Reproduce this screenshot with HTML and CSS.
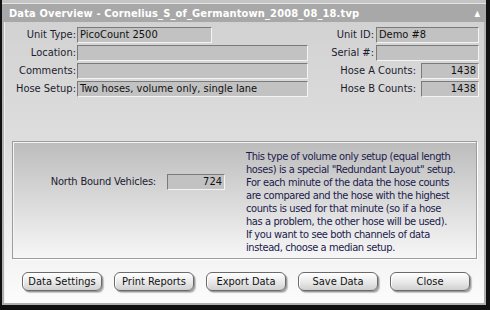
FILE: index.html
```html
<!DOCTYPE html>
<html lang="en">
<head>
    <meta charset="UTF-8">
    <meta name="viewport" content="width=device-width, initial-scale=1.0">
    <title>Data Overview</title>
    <link rel="stylesheet" href="styles.css">
</head>
<body>
    <div class="window">
        <div class="titlebar">
            <span class="title">Data Overview - Cornelius_S_of_Germantown_2008_08_18.tvp</span>
            <span class="arrow">&#9650;</span>
        </div>
        <div class="content">
            <div class="row">
                <span class="label lbl_left">Unit Type:</span>
                <span class="field f_short">PicoCount 2500</span>
                <span class="label lbl_right">Unit ID:</span>
                <span class="field f_id">Demo #8</span>
            </div>
            <div class="row">
                <span class="label lbl_left">Location:</span>
                <span class="field f_long"></span>
                <span class="label lbl_right">Serial #:</span>
                <span class="field f_id"></span>
            </div>
            <div class="row">
                <span class="label lbl_left">Comments:</span>
                <span class="field f_long"></span>
                <span class="label lbl_right">Hose A Counts:</span>
                <span class="field f_num">1438</span>
            </div>
            <div class="row">
                <span class="label lbl_left">Hose Setup:</span>
                <span class="field f_long">Two hoses, volume only, single lane</span>
                <span class="label lbl_right">Hose B Counts:</span>
                <span class="field f_num">1438</span>
            </div>

            <div class="group">
                <div class="group_left">
                    <span class="label nb_label">North Bound Vehicles:</span>
                    <span class="field f_num">724</span>
                </div>
                <p class="note">This type of volume only setup (equal length<br>
                    hoses) is a special "Redundant Layout" setup.<br>
                    For each minute of the data the hose counts<br>
                    are compared and the hose with the highest<br>
                    counts is used for that minute (so if a hose<br>
                    has a problem, the other hose will be used).<br>
                    If you want to see both channels of data<br>
                    instead, choose a median setup.</p>
            </div>

            <div class="buttons">
                <button type="button" class="btn">Data Settings</button>
                <button type="button" class="btn">Print Reports</button>
                <button type="button" class="btn">Export Data</button>
                <button type="button" class="btn">Save Data</button>
                <button type="button" class="btn">Close</button>
            </div>
        </div>
    </div>
</body>
</html>
```

FILE: styles.css
```css
body {
    margin: 0;
    background-color: #111;
    font-family: "DejaVu Sans Condensed", "Liberation Sans", sans-serif;
    font-size: 11px;
    width: 490px;
    height: 310px;
    overflow: hidden;
}
.window {
    margin-left: 2px;
    width: 484px;
    height: 302px;
    border-top: 3px solid #c4c4c4;
    background-color: #b0b0b0;
}
.titlebar {
    height: 19px;
    background-color: #a8a8a8;
    border-top: 1px solid #e4e4e4;
    box-sizing: border-box;
    display: flex;
    align-items: center;
    padding: 1px 6px 1px 7px;
    color: white;
}
.title {
    font-weight: bold;
    font-size: 11px;
    letter-spacing: 0.15px;
    flex: 1;
}
.arrow {
    font-size: 8px;
}
.content {
    margin: 0 2px;
    height: 281px;
    box-sizing: border-box;
    padding-top: 5px;
    background: linear-gradient(#d2d2d2, #dedede 45%, #fcfcfc);
    border-left: 1px solid #f0f0f0;
}
.row {
    display: flex;
    height: 16px;
    margin-bottom: 2px;
}
.label {
    color: #1c1c30;
    text-align: right;
    line-height: 16px;
    padding-right: 1px;
    box-sizing: border-box;
}
.lbl_left {
    width: 72px;
}
.lbl_right {
    flex: 1;
}
.field {
    background-color: #c2c2c2;
    border: 1px solid;
    border-color: #7a7a7a #f4f4f4 #f4f4f4 #7a7a7a;
    height: 16px;
    box-sizing: border-box;
    line-height: 13px;
    padding: 0 2px;
    color: #111;
    white-space: nowrap;
    overflow: hidden;
}
.f_short {
    width: 135px;
}
.f_long {
    width: 231px;
}
.f_id {
    width: 103px;
    margin-left: 1px;
    margin-right: 5px;
}
.f_num {
    width: 58px;
    text-align: right;
    margin-left: 4px;
    margin-right: 5px;
}
.group {
    margin: 44px 0 0 7px;
    width: 465px;
    height: 118px;
    box-sizing: border-box;
    border: 1px solid #9c9c9c;
    box-shadow: 1px 1px 0 #fff, inset 1px 1px 0 #f4f4f4;
    background: linear-gradient(#bcbcbc, #f6f6f6);
    display: flex;
}
.group_left {
    width: 232px;
    display: flex;
    justify-content: flex-end;
    align-items: flex-start;
    padding-top: 32px;
    box-sizing: border-box;
    padding-right: 20px;
}
.nb_label {
    letter-spacing: -0.2px;
}
.group_left .f_num {
    margin-left: 10px;
    margin-right: 0;
}
.note {
    margin: 8px 0 0 1px;
    width: 228px;
    white-space: nowrap;
    line-height: 13px;
    letter-spacing: -0.4px;
    color: #1a1a4c;
}
.buttons {
    display: flex;
    gap: 12px;
    margin: 13px 0 0 17px;
}
.btn {
    width: 80px;
    height: 19px;
    padding: 0;
    font-family: inherit;
    font-size: 11px;
    color: #111;
    border: 1px solid #6a6a6a;
    border-radius: 6px;
    background: linear-gradient(#ffffff, #e6e6e6 60%, #cfcfcf);
    box-shadow: 1px 1px 0 #9a9a9a, 2px 2px 1px #c4c4c4, inset 1px 1px 0 #fff;
}
```
